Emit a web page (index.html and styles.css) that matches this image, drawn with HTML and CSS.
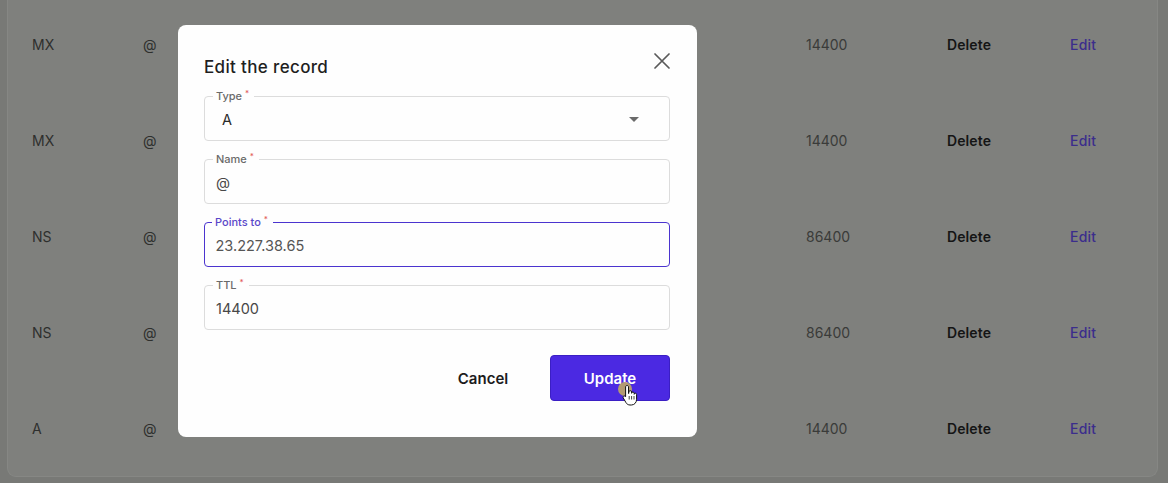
FILE: index.html
```html
<!DOCTYPE html>
<html lang="en">
<head>
<meta charset="utf-8">
<title>Edit the record</title>
<link rel="stylesheet" href="styles.css">
</head>
<body>
<div class="page">
  <div class="card">
    <div class="row"><span class="c-type">MX</span><span class="c-name">@</span><span class="c-ttl">14400</span><span class="c-del">Delete</span><span class="c-edit">Edit</span></div>
    <div class="row"><span class="c-type">MX</span><span class="c-name">@</span><span class="c-ttl">14400</span><span class="c-del">Delete</span><span class="c-edit">Edit</span></div>
    <div class="row"><span class="c-type">NS</span><span class="c-name">@</span><span class="c-ttl">86400</span><span class="c-del">Delete</span><span class="c-edit">Edit</span></div>
    <div class="row"><span class="c-type">NS</span><span class="c-name">@</span><span class="c-ttl">86400</span><span class="c-del">Delete</span><span class="c-edit">Edit</span></div>
    <div class="row"><span class="c-type">A</span><span class="c-name">@</span><span class="c-ttl">14400</span><span class="c-del">Delete</span><span class="c-edit">Edit</span></div>
  </div>
</div>

<div class="modal">
  <div class="modal-head">
    <h2 class="modal-title">Edit the record</h2>
    <svg class="close" width="16" height="16" viewBox="0 0 16 16"><path d="M1 1L15 15M15 1L1 15" stroke="#5a5a5a" stroke-width="1.7" stroke-linecap="round"/></svg>
  </div>
  <div class="fields">
    <div class="field">
      <span class="label">Type<sup class="req">*</sup></span>
      <span class="value value-select">A</span>
      <svg class="caret" width="10" height="5" viewBox="0 0 10 5"><path d="M0 0H10L5 5Z" fill="#6a6a6a"/></svg>
    </div>
    <div class="field">
      <span class="label">Name<sup class="req">*</sup></span>
      <span class="value">@</span>
    </div>
    <div class="field focused">
      <span class="label">Points to<sup class="req">*</sup></span>
      <span class="value">23.227.38.65</span>
    </div>
    <div class="field">
      <span class="label">TTL<sup class="req">*</sup></span>
      <span class="value">14400</span>
    </div>
  </div>
  <div class="actions">
    <button class="btn btn-cancel">Cancel</button>
    <button class="btn btn-update">Update</button>
  </div>
  <div class="cursor">
    <span class="click-dot"></span>
    <svg class="hand" width="16" height="22" viewBox="0 0 16 22"><path d="M5 1.5c.9 0 1.5.6 1.5 1.5v6.5l.3-.1V8c0-.8.6-1.4 1.4-1.4s1.4.6 1.4 1.4v1.3c0-.8.6-1.3 1.3-1.3s1.3.6 1.3 1.3v1c.1-.7.6-1.1 1.2-1.1.7 0 1.2.6 1.2 1.3v4.8c0 3.2-2.2 5.7-5.2 5.7H8c-1.8 0-3.1-.9-4-2.3L1.3 14c-.4-.7-.2-1.5.5-1.9.6-.3 1.300-.1 1.7.4l.1.2V3c0-.9.6-1.5 1.4-1.5z" fill="#fff" stroke="#111" stroke-width="1"/><path d="M7.2 12v3.5M9.6 12v3.5M12 12v3.5" stroke="#111" stroke-width=".8"/></svg>
  </div>
</div>
</body>
</html>
```
FILE: styles.css
```css
* { box-sizing: border-box; }
html, body { margin: 0; padding: 0; }
body {
  width: 1168px;
  height: 483px;
  overflow: hidden;
  background: #787976;
  font-family: Inter, "Noto Sans", sans-serif;
}
.page {
  padding: 0 10px 0 7px;
}
.card {
  margin-top: -4px;
  background: #7f807d;
  border: 1px solid #868784;
  border-top: none;
  border-radius: 0 0 9px 9px;
}
.row {
  height: 96px;
  display: flex;
  align-items: center;
  font-size: 14px;
  color: #2e2f2d;
}
.c-type { width: 111px; padding-left: 24px; }
.c-name { width: 687px; padding-left: 24px; }
.c-ttl { width: 141px; color: #3a3b39; }
.c-del { width: 123px; font-weight: 600; color: #151515; letter-spacing: 0.1px; }
.c-edit { font-weight: 500; color: #3b2d8c; letter-spacing: 0.2px; }

.modal {
  position: absolute;
  left: 178px;
  top: 25px;
  width: 519px;
  height: 412px;
  background: #fefefe;
  border-radius: 8px;
  padding: 29px 27px 0 26px;
}
.modal-head {
  height: 24px;
  display: flex;
  justify-content: space-between;
  align-items: flex-start;
}
.modal-title {
  margin: 1px 0 0;
  font-size: 17px;
  line-height: 24px;
  font-weight: 500;
  letter-spacing: 0.35px;
  color: #1f1f1f;
}
.close { margin-top: -1px; margin-right: 0; }
.fields {
  margin-top: 18px;
  display: flex;
  flex-direction: column;
  gap: 18px;
}
.field {
  position: relative;
  height: 45px;
  border: 1px solid #dcdcdc;
  border-radius: 4px;
  display: flex;
  align-items: center;
  padding: 2px 12px 0 11px;
}
.field.focused {
  border: 1.5px solid #4b34cf;
  padding-left: 10.5px;
}
.label {
  position: absolute;
  left: 8px;
  top: -8px;
  background: #fefefe;
  padding: 0 5px 0 3px;
  font-size: 11px;
  line-height: 14px;
  font-weight: 500;
  color: #6a6a6a;
}
.focused .label { color: #5a47c9; left: 7px; top: -8.5px; }
.req {
  color: #e25a5a;
  font-size: 8px;
  margin-left: 3px;
  vertical-align: 4px;
  line-height: 0;
}
.value {
  font-size: 14.5px;
  color: #474747;
  flex: 1;
}
.focused .value { color: #555; }
.value-select { padding-left: 6px; color: #2a2a2a; }
.caret { margin-right: 18px; }

.actions {
  margin-top: 25px;
  display: flex;
  justify-content: flex-end;
  gap: 17px;
}
.btn {
  height: 46px;
  border-radius: 4px;
  font-family: Inter, "Noto Sans", sans-serif;
  font-size: 15px;
  font-weight: 600;
  cursor: pointer;
}
.btn-cancel {
  width: 100px;
  border: none;
  background: transparent;
  color: #1c1c1c;
}
.btn-update {
  width: 120px;
  border: 1px solid #3b1fc4;
  background: #4b29e2;
  color: #ffffff;
}
.cursor {
  position: absolute;
  left: 440px;
  top: 355px;
  width: 24px;
  height: 30px;
}
.click-dot {
  position: absolute;
  left: 0;
  top: 2px;
  width: 14px;
  height: 14px;
  border-radius: 50%;
  background: #b39a72;
}
.hand {
  position: absolute;
  left: 4px;
  top: 4px;
}
```
